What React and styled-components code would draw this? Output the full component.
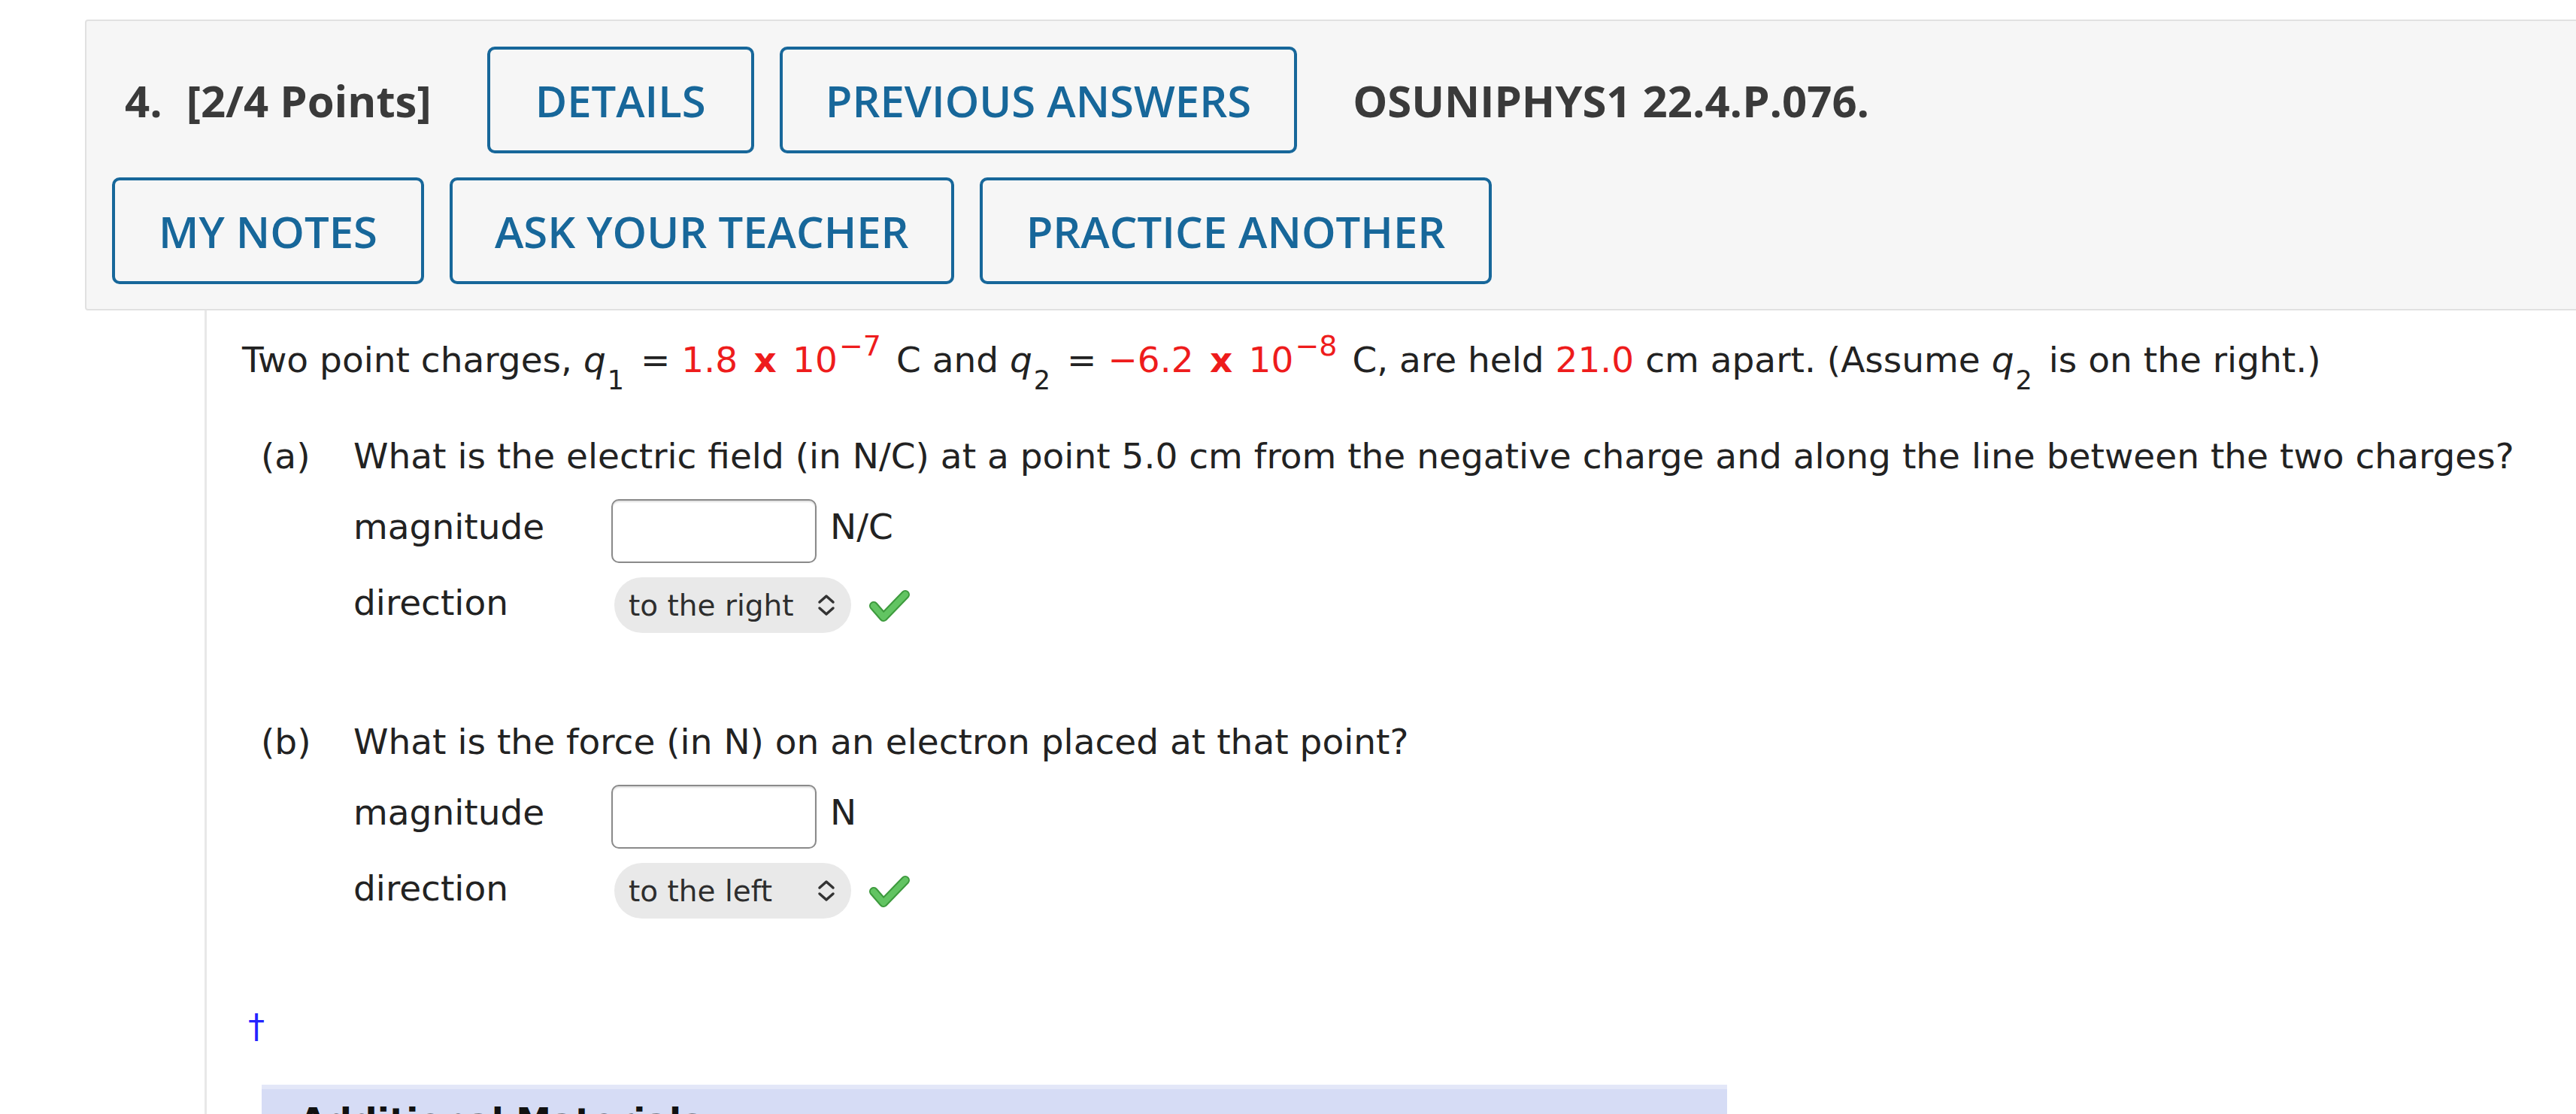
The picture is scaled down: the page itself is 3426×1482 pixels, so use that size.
import React from 'react';
import styled, { createGlobalStyle } from 'styled-components';

const Global = createGlobalStyle`
  html, body { margin: 0; padding: 0; background: #ffffff; overflow: hidden; }
  body { font-family: "DejaVu Sans", Verdana, sans-serif; }
  #root { width: 3426px; height: 1482px; overflow: hidden; }
`;

const Page = styled.div`
  width: 3426px;
  height: 1482px;
  overflow: hidden;
  padding-top: 26px;
  box-sizing: border-box;
`;

const HeaderPanel = styled.div`
  margin-left: 113px;
  width: 3400px;
  box-sizing: border-box;
  background: #f6f6f6;
  border: 2px solid #e1e1e1;
  border-radius: 4px;
  padding: 34px 0 33px 34px;
  display: flex;
  flex-direction: column;
  gap: 32px;
  font-family: "Open Sans", "Liberation Sans", sans-serif;
`;

const HeaderRow = styled.div`
  display: flex;
  align-items: center;
  gap: 34px;
`;

const QuestionNumber = styled.div`
  font-size: 58px;
  font-weight: 700;
  color: #3a3a3a;
  padding-left: 17px;
  margin-right: 40px;
  white-space: nowrap;
  & > span { margin-left: 32px; }
`;

const ActionButton = styled.button`
  height: 142px;
  box-sizing: border-box;
  border: 4px solid #17679a;
  border-radius: 10px;
  background: transparent;
  color: #17679a;
  font-family: "Open Sans", "Liberation Sans", sans-serif;
  font-size: 58px;
  font-weight: 600;
  padding: 0 ${(p) => p.$pad || 60}px;
  white-space: nowrap;
  cursor: pointer;
`;

const ProblemCode = styled.div`
  font-size: 58px;
  font-weight: 700;
  color: #3a3a3a;
  margin-left: 40px;
  white-space: nowrap;
`;

const Body = styled.div`
  margin-left: 272px;
  border-left: 3px solid #e8e8e8;
  padding: 36px 0 0 47px;
  height: 1200px;
  color: #222222;
  font-family: "DejaVu Sans", Verdana, sans-serif;
  font-size: 47px;
`;

const Stem = styled.p`
  margin: 0;
  line-height: 60px;
  white-space: nowrap;
`;

const Var = styled.i`
  font-style: italic;
`;

const Sub = styled.sub`
  font-size: 35px;
  line-height: 0;
  vertical-align: -23px;
  font-style: normal;
  margin-left: 2px;
  margin-right: 7px;
`;

const Sup = styled.sup`
  font-size: 38px;
  line-height: 0;
  vertical-align: 22px;
  margin-left: 2px;
  margin-right: 5px;
`;

const Red = styled.span`
  color: #ee1c1c;
`;

const Times = styled.b`
  font-weight: 700;
  margin: 0 5px;
`;

const Part = styled.div`
  display: flex;
  padding-left: 25px;
  margin-top: ${(p) => p.$top}px;
`;

const PartLabel = styled.div`
  width: 123px;
  flex: none;
  line-height: 60px;
`;

const PartBody = styled.div`
  display: flex;
  flex-direction: column;
`;

const Question = styled.div`
  line-height: 60px;
  white-space: nowrap;
`;

const AnswerRow = styled.div`
  display: flex;
  align-items: flex-start;
  margin-top: ${(p) => p.$top}px;
  height: ${(p) => p.$h}px;
`;

const FieldLabel = styled.div`
  width: 343px;
  flex: none;
  line-height: ${(p) => p.$lh}px;
`;

const TextInput = styled.input`
  width: 273px;
  height: 85px;
  box-sizing: border-box;
  border: 2px solid #8a8a8a;
  border-radius: 10px;
  background: #ffffff;
  box-shadow: inset 0 2px 2px rgba(0, 0, 0, 0.12);
  outline: none;
  padding: 0 12px;
  font-family: inherit;
  font-size: 40px;
`;

const Unit = styled.div`
  margin-left: 18px;
  line-height: 73px;
`;

const SelectPill = styled.div`
  width: 315px;
  height: 74px;
  margin-left: 4px;
  box-sizing: border-box;
  border-radius: 37px;
  background: #e9e9e9;
  padding: 0 19px 0 19px;
  display: flex;
  align-items: center;
  justify-content: space-between;
  font-size: 39px;
  color: #2e2e2e;
  white-space: nowrap;
`;

const CheckIcon = styled.svg`
  margin-left: 23px;
  align-self: center;
  flex: none;
`;

const Dagger = styled.div`
  margin-top: 122px;
  padding-left: 8px;
  font-size: 44px;
  line-height: 44px;
  color: #2323ff;
`;

const Materials = styled.div`
  margin-top: 55px;
  margin-left: 26px;
  width: 1949px;
  box-sizing: border-box;
  background: #d6dcf5;
  border-top: 6px solid #e3e7f8;
  padding: 12px 50px 20px;
  font-weight: 700;
  line-height: 60px;
  color: #111;
`;

const Chevrons = () => (
  <svg width="28" height="32" viewBox="0 0 28 32">
    <polyline points="5,12 14,4 23,12" fill="none" stroke="#333" strokeWidth="3.5" strokeLinecap="round" strokeLinejoin="round" />
    <polyline points="5,20 14,28 23,20" fill="none" stroke="#333" strokeWidth="3.5" strokeLinecap="round" strokeLinejoin="round" />
  </svg>
);

const Check = () => (
  <CheckIcon width="56" height="45" viewBox="0 0 56 45">
    <path d="M7 23 L20 38 L49 8" fill="none" stroke="#3d9a3d" strokeWidth="12" strokeLinecap="round" strokeLinejoin="round" />
    <path d="M7 23 L20 38 L49 8" fill="none" stroke="#62c462" strokeWidth="8" strokeLinecap="round" strokeLinejoin="round" />
  </CheckIcon>
);

const PartBlock = ({ label, question, unit, choice, top }) => (
  <Part $top={top}>
    <PartLabel>{label}</PartLabel>
    <PartBody>
      <Question>{question}</Question>
      <AnswerRow $top={27} $h={85}>
        <FieldLabel $lh={73}>magnitude</FieldLabel>
        <TextInput type="text" />
        <Unit>{unit}</Unit>
      </AnswerRow>
      <AnswerRow $top={19} $h={74}>
        <FieldLabel $lh={67.5}>direction</FieldLabel>
        <SelectPill>
          <span>{choice}</span>
          <Chevrons />
        </SelectPill>
        <Check />
      </AnswerRow>
    </PartBody>
  </Part>
);

export default function App() {
  return (
    <Page>
      <Global />
      <HeaderPanel>
        <HeaderRow>
          <QuestionNumber>
            4.<span>[2/4 Points]</span>
          </QuestionNumber>
          <ActionButton>DETAILS</ActionButton>
          <ActionButton $pad={57}>PREVIOUS ANSWERS</ActionButton>
          <ProblemCode>OSUNIPHYS1 22.4.P.076.</ProblemCode>
        </HeaderRow>
        <HeaderRow>
          <ActionButton $pad={58}>MY NOTES</ActionButton>
          <ActionButton $pad={56}>ASK YOUR TEACHER</ActionButton>
          <ActionButton $pad={58}>PRACTICE ANOTHER</ActionButton>
        </HeaderRow>
      </HeaderPanel>
      <Body>
        <Stem>
          Two point charges, <Var>q</Var>
          <Sub>1</Sub> = <Red>1.8<Times> x </Times>10<Sup>−7</Sup></Red> C and <Var>q</Var>
          <Sub>2</Sub> = <Red>−6.2<Times> x </Times>10<Sup>−8</Sup></Red> C, are held <Red>21.0</Red> cm
          apart. (Assume <Var>q</Var>
          <Sub>2</Sub> is on the right.)
        </Stem>
        <PartBlock
          top={68}
          label="(a)"
          question="What is the electric field (in N/C) at a point 5.0 cm from the negative charge and along the line between the two charges?"
          unit="N/C"
          choice="to the right"
        />
        <PartBlock
          top={115}
          label="(b)"
          question="What is the force (in N) on an electron placed at that point?"
          unit="N"
          choice="to the left"
        />
        <Dagger>†</Dagger>
        <Materials>Additional Materials</Materials>
      </Body>
    </Page>
  );
}
